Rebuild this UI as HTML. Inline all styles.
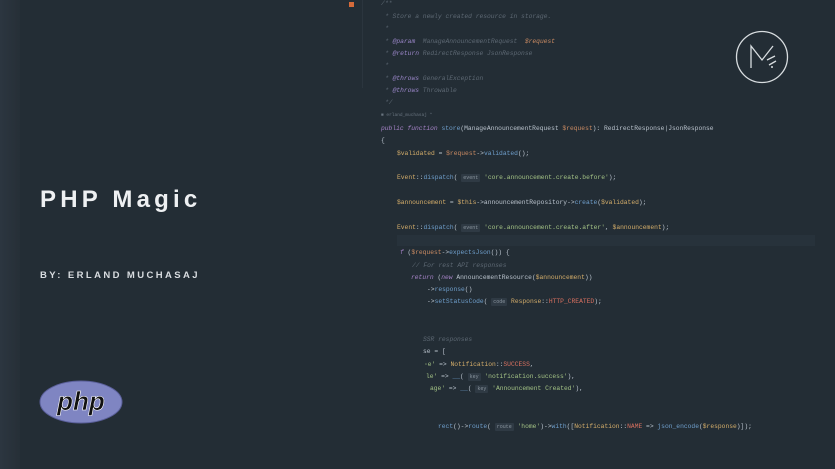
<!DOCTYPE html>
<html><head><meta charset="utf-8"><style>
body{margin:0;width:835px;height:469px;overflow:hidden;background:#232d35;position:relative;font-family:"Liberation Sans",sans-serif}
.strip{position:absolute;left:0;top:0;width:20px;height:469px;background:linear-gradient(90deg,#2c3640,#262f37)}
.l{position:absolute;font-family:"Liberation Mono",monospace;font-size:6.3px;white-space:pre;color:#b9c2cc;line-height:8px}
.c{color:#5d6873;font-style:italic}
.k{color:#a784c8;font-style:italic}
.v{color:#c98a62}
.f{color:#6f9fcc}
.y{color:#d4ad6a}
.s{color:#a3c285}
.tag{color:#9a86c8;font-style:italic}
.h{display:inline-block;background:#2f3a44;color:#8b96a0;font-size:5px;padding:0 2px;border-radius:1px}
.o{color:#d8705f}
</style></head><body>
<div class="strip"></div>
<div style="position:absolute;left:397px;top:235px;width:418px;height:11px;background:#27323b"></div>
<div style="position:absolute;left:349px;top:2px;width:5px;height:5px;background:#d46a3a"></div>
<div style="position:absolute;left:362px;top:0;width:1px;height:88px;background:#2b353e"></div>

<div class="l c" style="left:381px;top:0px">/**</div>
<div class="l c" style="left:385px;top:13px">* Store a newly created resource in storage.</div>
<div class="l c" style="left:385px;top:25px">*</div>
<div class="l c" style="left:385px;top:38px">* <span class="tag">@param</span>  ManageAnnouncementRequest  <span class="v">$request</span></div>
<div class="l c" style="left:385px;top:50px">* <span class="tag">@return</span> RedirectResponse JsonResponse</div>
<div class="l c" style="left:385px;top:62px">*</div>
<div class="l c" style="left:385px;top:75px">* <span class="tag">@throws</span> GeneralException</div>
<div class="l c" style="left:385px;top:87px">* <span class="tag">@throws</span> Throwable</div>
<div class="l c" style="left:385px;top:99px">*/</div>
<div class="l" style="left:381px;top:112px;font-size:4.5px;color:#6a7580">&#9632; erland_muchasaj *</div>
<div class="l" style="left:381px;top:125px"><span class="k">public function</span> <span class="f">store</span>(ManageAnnouncementRequest <span class="v">$request</span>): RedirectResponse|JsonResponse</div>
<div class="l" style="left:381px;top:137px">{</div>
<div class="l" style="left:397px;top:150px"><span class="y">$validated</span> = <span class="v">$request</span>-><span class="f">validated</span>();</div>
<div class="l" style="left:397px;top:174px"><span class="y">Event</span>::<span class="f">dispatch</span>( <span class="h">event</span> <span class="s">'core.announcement.create.before'</span>);</div>
<div class="l" style="left:397px;top:199px"><span class="y">$announcement</span> = <span class="y">$this</span>->announcementRepository-><span class="f">create</span>(<span class="y">$validated</span>);</div>
<div class="l" style="left:397px;top:224px"><span class="y">Event</span>::<span class="f">dispatch</span>( <span class="h">event</span> <span class="s">'core.announcement.create.after'</span>, <span class="y">$announcement</span>);</div>
<div class="l" style="left:400px;top:249px"><span class="k">f</span> (<span class="v">$request</span>-><span class="f">expectsJson</span>()) {</div>
<div class="l c" style="left:412px;top:262px">// For rest API responses</div>
<div class="l" style="left:411px;top:274px"><span class="k">return</span> (<span class="k">new</span> AnnouncementResource(<span class="y">$announcement</span>))</div>
<div class="l" style="left:427px;top:286px">-><span class="f">response</span>()</div>
<div class="l" style="left:427px;top:298px">-><span class="f">setStatusCode</span>( <span class="h">code</span> <span class="y">Response</span>::<span class="o">HTTP_CREATED</span>);</div>
<div class="l c" style="left:423px;top:336px">SSR responses</div>
<div class="l" style="left:423px;top:348px">se = [</div>
<div class="l" style="left:424px;top:361px"><span class="s">◦e'</span> => <span class="y">Notification</span>::<span class="o">SUCCESS</span>,</div>
<div class="l" style="left:426px;top:373px"><span class="s">le'</span> => <span class="f">__</span>( <span class="h">key</span> <span class="s">'notification.success'</span>),</div>
<div class="l" style="left:430px;top:385px"><span class="s">age'</span> => <span class="f">__</span>( <span class="h">key</span> <span class="s">'Announcement Created'</span>),</div>
<div class="l" style="left:438px;top:423px"><span class="f">rect</span>()-><span class="f">route</span>( <span class="h">route</span> <span class="s">'home'</span>)-><span class="f">with</span>([<span class="y">Notification</span>::<span class="o">NAME</span> => <span class="f">json_encode</span>(<span class="y">$response</span>)]);</div>

<svg style="position:absolute;left:735px;top:30px" width="54" height="54" viewBox="0 0 54 54">
<circle cx="27" cy="27" r="25.5" fill="none" stroke="#d8dde0" stroke-width="1.3"/>
<path d="M16 38 V16 L27 30 L38 16" fill="none" stroke="#d8dde0" stroke-width="1.3"/>
<path d="M32 30 L40 26 M34 35 L41 31" stroke="#d8dde0" stroke-width="1.3"/>
<circle cx="37" cy="37" r="1" fill="#d8dde0"/>
</svg>

<div style="position:absolute;left:40px;top:186px;color:#eef0f2;font-size:24px;letter-spacing:4.2px;font-weight:bold">PHP Magic</div>
<div style="position:absolute;left:40px;top:270px;color:#d8dce0;font-size:9.5px;letter-spacing:2.4px;font-weight:bold">BY: ERLAND MUCHASAJ</div>

<svg style="position:absolute;left:39px;top:380px" width="84" height="44" viewBox="0 0 84 44">
<ellipse cx="42" cy="22" rx="41" ry="21" fill="#7f85c2" stroke="#5a5f99" stroke-width="1"/>
<text x="42" y="30" text-anchor="middle" font-family="Liberation Sans,sans-serif" font-size="26" font-weight="bold" font-style="italic" fill="#111" stroke="#fff" stroke-width="0.6">php</text>
</svg>
</body></html>
